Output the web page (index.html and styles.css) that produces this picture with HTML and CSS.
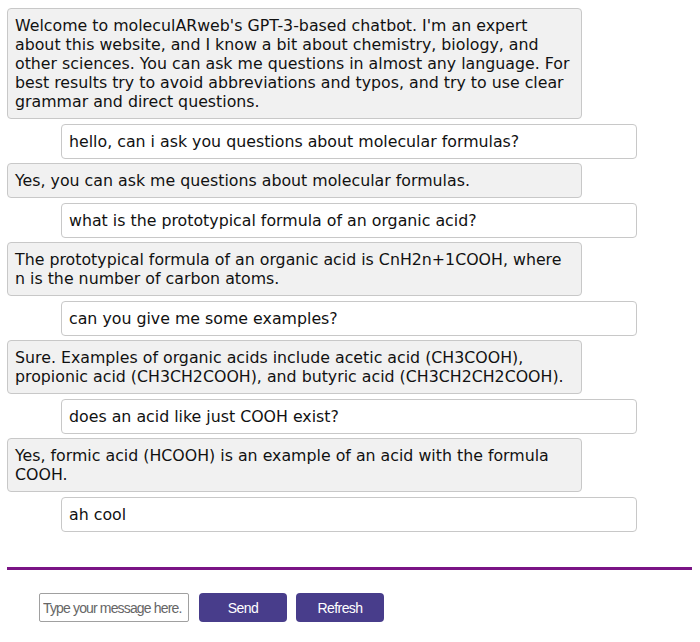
FILE: index.html
```html
<!DOCTYPE html>
<html>
<head>
<meta charset="utf-8">
<link rel="stylesheet" href="styles.css">
</head>
<body>
<div class="chat">
  <div class="msg bot">Welcome to moleculARweb's GPT-3-based chatbot. I'm an expert about this website, and I know a bit about chemistry, biology, and other sciences. You can ask me questions in almost any language. For best results try to avoid abbreviations and typos, and try to use clear grammar and direct questions.</div>
  <div class="msg user">hello, can i ask you questions about molecular formulas?</div>
  <div class="msg bot">Yes, you can ask me questions about molecular formulas.</div>
  <div class="msg user">what is the prototypical formula of an organic acid?</div>
  <div class="msg bot">The prototypical formula of an organic acid is CnH2n+1COOH, where n is the number of carbon atoms.</div>
  <div class="msg user">can you give me some examples?</div>
  <div class="msg bot">Sure. Examples of organic acids include acetic acid (CH3COOH), propionic acid (CH3CH2COOH), and butyric acid (CH3CH2CH2COOH).</div>
  <div class="msg user">does an acid like just COOH exist?</div>
  <div class="msg bot">Yes, formic acid (HCOOH) is an example of an acid with the formula COOH.</div>
  <div class="msg user">ah cool</div>
</div>
<hr class="divider">
<form class="composer">
  <input class="input" type="text" placeholder="Type your message here.">
  <button class="btn" type="button">Send</button>
  <button class="btn" type="button">Refresh</button>
</form>
</body>
</html>
```
FILE: styles.css
```css
html, body {
  margin: 0;
  padding: 0;
  background: #ffffff;
}
body {
  font-family: "DejaVu Sans", Verdana, sans-serif;
  color: #111;
}
.chat {
  display: flex;
  flex-direction: column;
  gap: 4.5px;
  padding: 8px 0 0 7px;
  height: 540px;
  box-sizing: border-box;
}
.msg {
  box-sizing: border-box;
  border: 1px solid #c8c8c8;
  border-radius: 4px;
  padding: 7px;
  font-size: 15.8px;
  line-height: 19px;
}
.bot {
  width: 575px;
  background: #f1f1f1;
}
.user {
  width: 576px;
  margin-left: 54px;
  background: #ffffff;
}
.divider {
  margin: 27px 8px 0 7px;
  border: 0;
  height: 3px;
  background: #7a1485;
}
.composer {
  display: flex;
  gap: 9px;
  margin: 23px 0 0 39px;
}
.input {
  box-sizing: border-box;
  width: 150px;
  height: 29px;
  border: 1px solid #a0a0a0;
  border-radius: 2px;
  padding: 0 3px;
  font-family: "Liberation Sans", Arial, sans-serif;
  font-size: 14px;
  letter-spacing: -0.85px;
  margin-right: 1px;
}
.input::placeholder {
  color: #666;
}
.btn {
  width: 88px;
  height: 29px;
  border: 0;
  border-radius: 4px;
  background: #483d8b;
  color: #fff;
  font-family: "Liberation Sans", Arial, sans-serif;
  font-size: 14px;
  letter-spacing: -0.6px;
}
```
